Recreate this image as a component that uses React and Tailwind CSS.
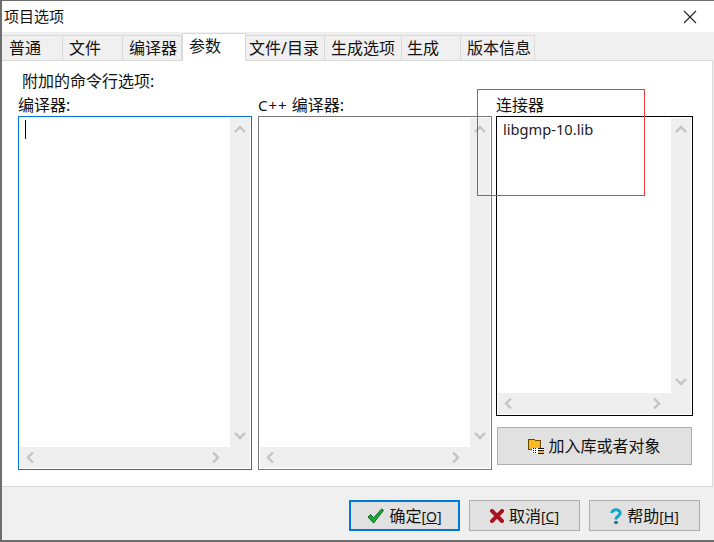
function Chevron({ dir, cls }) {
  const d = {
    up: "M1 7 L6 2 L11 7",
    down: "M1 2 L6 7 L11 2",
    left: "M7 0.5 L2 5.5 L7 10.5",
    right: "M2 0.5 L7 5.5 L2 10.5",
  }[dir];
  const box = dir === "up" || dir === "down" ? "0 0 12 9" : "0 0 9 11";
  const size = dir === "up" || dir === "down" ? "w-[12px] h-[9px]" : "w-[9px] h-[11px]";
  return (
    <svg viewBox={box} className={`${size} ${cls || ""}`} fill="none" stroke="#c4c4c4" strokeWidth="2.4">
      <path d={d} />
    </svg>
  );
}

function ListBox({ w, h, border, caret, children }) {
  return (
    <div className={`${w} ${h} ${border} border bg-white p-px flex flex-col shrink-0 relative`}>
      <div className="flex flex-1 min-h-0">
        <div className="flex-1 relative pl-[5px] pt-[2px] leading-[20px] text-[#222]">
          {caret && <div className="w-px h-[19px] bg-black" />}
          {children}
        </div>
        <div className="w-[20px] bg-[#efefef] flex flex-col justify-between items-center py-[7px]">
          <Chevron dir="up" />
          <Chevron dir="down" />
        </div>
      </div>
      <div className="h-[21px] bg-[#efefef] flex items-center justify-between pl-[6px] pr-[30px]">
        <Chevron dir="left" />
        <Chevron dir="right" />
      </div>
    </div>
  );
}

function Tab({ w, pl, label, active }) {
  return active ? (
    <div className={`${w} ${pl} h-[28px] bg-white border-x border-t border-[#d9d9d9] -mb-px relative z-10 text-[16px] leading-[24px] text-[#111]`}>
      {label}
    </div>
  ) : (
    <div className={`${w} ${pl} h-[25px] bg-[#f0f0f0] border-r border-t border-[#d9d9d9] text-[16px] leading-[24px] text-[#111]`}>
      {label}
    </div>
  );
}

function BottomButton({ icon, label, hot, focused }) {
  return (
    <div
      className={`w-[111px] h-[31px] bg-[#e1e1e1] flex items-center justify-center gap-[5px] text-[16px] text-[#111] ${
        focused ? "border-2 border-[#0078d7]" : "border border-[#adadad]"
      }`}
    >
      {icon}
      <span>
        {label}
        <span className="text-[14px]">
          [<span className="underline">{hot}</span>]
        </span>
      </span>
    </div>
  );
}

export default function App() {
  return (
    <div
      className="w-[714px] h-[542px] relative overflow-hidden bg-[#f0f0f0] border-l-2 border-t border-b-2 border-[#6e6e6e] flex flex-col"
      style={{ fontFamily: '"Noto Sans", "Noto Sans CJK SC", sans-serif' }}
    >
      {/* title bar */}
      <div className="h-[31px] bg-white flex items-center justify-between pl-[2px] pr-[17px] shrink-0">
        <span className="text-[15px] text-[#111]">项目选项</span>
        <svg viewBox="0 0 14 14" className="w-[14px] h-[14px]" fill="none" stroke="#222" strokeWidth="1.1">
          <path d="M1 1 L13 13 M13 1 L1 13" />
        </svg>
      </div>

      {/* tabs */}
      <div className="h-[28px] flex items-end shrink-0 relative z-10">
        <Tab w="w-[61px]" pl="pl-[7px]" label="普通" />
        <Tab w="w-[60px]" pl="pl-[6px]" label="文件" />
        <Tab w="w-[59px]" pl="pl-[6px]" label="编译器" />
        <Tab w="w-[64px]" pl="pl-[6px]" label="参数" active />
        <Tab w="w-[79px]" pl="pl-[3px]" label="文件/目录" />
        <Tab w="w-[77px]" pl="pl-[6px]" label="生成选项" />
        <Tab w="w-[59px]" pl="pl-[5px]" label="生成" />
        <Tab w="w-[74px]" pl="pl-[6px]" label="版本信息" />
      </div>

      {/* page */}
      <div className="h-[427px] bg-white border-t border-b border-r border-[#d9d9d9] mr-[1px] shrink-0 pl-[16px] pt-[10px]">
        <div className="pl-[4px] text-[16px] leading-[20px] text-[#111]">附加的命令行选项:</div>
        <div className="flex gap-[6px] mt-[3px]">
          <div className="flex flex-col">
            <div className="text-[16px] leading-[22px] text-[#111]">编译器:</div>
            <ListBox w="w-[234px]" h="h-[354px]" border="border-[#0078d7]" caret />
          </div>
          <div className="flex flex-col">
            <div className="text-[16px] leading-[22px] text-[#111]">
              <span className="text-[15px] tracking-[1px]">C++</span> 编译器:
            </div>
            <ListBox w="w-[234px]" h="h-[354px]" border="border-[#7a7a7a]" />
          </div>
          <div className="flex flex-col -ml-[2px]">
            <div className="text-[16px] leading-[22px] text-[#111]">连接器</div>
            <ListBox w="w-[197px]" h="h-[300px]" border="border-black">
              <span className="block -mt-[1px] text-[14.65px]">libgmp-10.lib</span>
            </ListBox>
            <div className="mt-[11px] ml-px w-[195px] h-[38px] bg-[#e1e1e1] border border-[#adadad] flex items-center justify-center gap-[4px] text-[16px] text-[#111]">
              <svg viewBox="0 0 16 16" className="w-[16px] h-[16px]" shapeRendering="crispEdges">
                <path d="M0 1 H6 L7 2 H12 V11 H0 Z" fill="#f8b820" stroke="#6a4a00" strokeWidth="1" />
                <rect x="4" y="10" width="12" height="6" fill="#fff" />
                <path d="M5 10h1v1H5zM7 10h1v1H7zM5 12h1v1H5zM7 12h1v1H7zM5 14h1v1H5zM7 14h1v1H7zM10 10h6v1H10zM10 15h6v1H10zM10 12h6v1H10z" fill="#111" />
                <path d="M10 13h6v2H10z" fill="#f8b820" />
              </svg>
              <span>加入库或者对象</span>
            </div>
          </div>
        </div>
      </div>

      {/* footer */}
      <div className="flex-1 flex justify-end gap-[9px] pt-[13px] pr-[14px]">
        <BottomButton
          focused
          hot="O"
          label="确定"
          icon={
            <svg viewBox="0 0 18 16" className="w-[17px] h-[16px]">
              <path d="M1 9 L4 6.5 L7 10 L15.5 0.5 L17.5 2 L7 15.5 Z" fill="#10b030" stroke="#0a4a18" strokeWidth="0.9" />
            </svg>
          }
        />
        <BottomButton
          hot="C"
          label="取消"
          icon={
            <svg viewBox="0 0 14 14" className="w-[14px] h-[14px]">
              <path d="M2 2 L12 12 M12 2 L2 12" stroke="#a81420" strokeWidth="4" strokeLinecap="square" />
            </svg>
          }
        />
        <BottomButton
          hot="H"
          label="帮助"
          icon={
            <svg viewBox="0 0 12 16" className="w-[12px] h-[16px]">
              <path d="M1.8 5 C1.8 0.8 10.2 0.8 10.2 5 C10.2 8 6 8 6 11.5" fill="none" stroke="#10a8c8" strokeWidth="3" />
              <rect x="4.3" y="13" width="3.4" height="3" fill="#0e7f98" />
            </svg>
          }
        />
      </div>

      {/* red annotation */}
      <div className="absolute left-[475px] top-[88px] w-[168px] h-[107px] border border-[#f03a3a] z-20" />
    </div>
  );
}
